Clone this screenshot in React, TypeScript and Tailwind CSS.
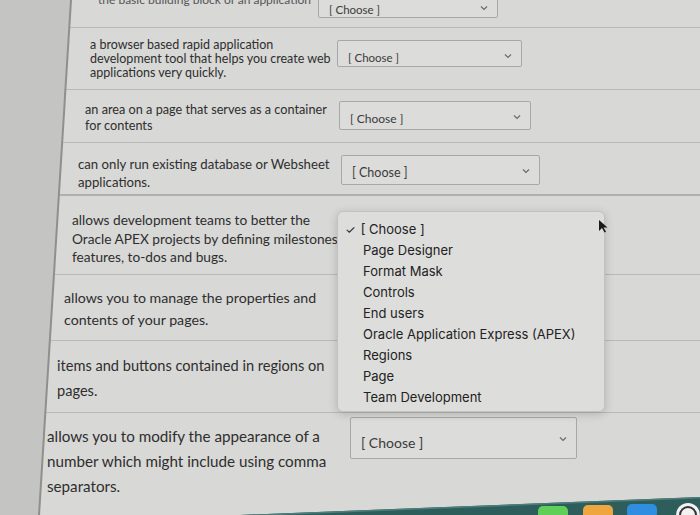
import React from "react";

const textFont = { fontFamily: "Lato, 'Open Sans', sans-serif" };

function Chevron() {
  return (
    <svg width="8" height="6" viewBox="0 0 8 6" className="flex-none">
      <path d="M1 1.5l3 3 3-3" fill="none" stroke="#6b6b6b" strokeWidth="1.2" />
    </svg>
  );
}

function Select({ w, h, size }: { w: string; h: string; size: string }) {
  return (
    <div
      className={`${w} ${h} ${size} flex-none flex items-start justify-between pl-[10px] pr-[9px] pt-[8px] bg-[#dcdcda] border border-[#a8a8a6] rounded-[2px] text-[#3b3b3b]`}
      style={textFont}
    >
      <span>[ Choose ]</span>
      <span className="pt-[4px]">
        <Chevron />
      </span>
    </div>
  );
}

const menuItems = [
  "Page Designer",
  "Format Mask",
  "Controls",
  "End users",
  "Oracle Application Express (APEX)",
  "Regions",
  "Page",
  "Team Development",
];

export default function App() {
  return (
    <div className="relative w-[700px] h-[515px] overflow-hidden bg-[#d8d8d6] text-[#2e2e2e]">
      <div className="flex h-full">
        {/* skewed gray margin left of the card */}
        <div className="w-[72px] flex-none h-full bg-[#8f8f8d] [clip-path:polygon(0_0,72px_0,40px_100%,0_100%)]">
          <div className="w-full h-full bg-[#c4c4c2] [clip-path:polygon(0_0,70px_0,38px_100%,0_100%)]" />
        </div>

        <div className="flex-1 -ml-[72px] flex flex-col" style={textFont}>
          {/* row 0 (cut off by the top of the photo) */}
          <div className="h-[28px] ml-[68px] flex-none flex border-b border-[#b9b9b7] overflow-hidden">
            <div className="w-[250px] pl-[30px] -mt-[7px] text-[12px] leading-[14px] whitespace-nowrap text-[#555]">
              the basic building block of an application
            </div>
            <div className="-mt-[12px]">
              <Select w="w-[180px]" h="h-[30px]" size="text-[11.5px] pt-[12px]" />
            </div>
          </div>

          {/* row 1 */}
          <div className="h-[62px] ml-[66px] flex-none flex items-start border-b border-[#b9b9b7]">
            <div className="w-[271px] pl-[24px] pt-[10px] text-[12.5px] leading-[14px] whitespace-nowrap">
              a browser based rapid application
              <br />
              development tool that helps you create web
              <br />
              applications very quickly.
            </div>
            <div className="pt-[12px]">
              <Select w="w-[185px]" h="h-[27px]" size="text-[11.5px]" />
            </div>
          </div>

          {/* row 2 */}
          <div className="h-[53px] ml-[63px] flex-none flex items-start border-b border-[#b9b9b7]">
            <div className="w-[276px] pl-[22px] pt-[11px] text-[12.7px] leading-[16px] whitespace-nowrap">
              an area on a page that serves as a container
              <br />
              for contents
            </div>
            <div className="pt-[11px]">
              <Select w="w-[192px]" h="h-[29px]" size="text-[12px]" />
            </div>
          </div>

          {/* row 3 */}
          <div className="h-[53px] ml-[60px] flex-none flex items-start border-b-2 border-[#b0b0ae]">
            <div className="w-[281px] pl-[18px] pt-[12px] text-[13.2px] leading-[18px] whitespace-nowrap">
              can only run existing database or Websheet
              <br />
              applications.
            </div>
            <div className="pt-[12px]">
              <Select w="w-[199px]" h="h-[30px]" size="text-[12.5px]" />
            </div>
          </div>

          {/* row 4 with the open menu */}
          <div className="relative h-[79px] ml-[55px] flex-none flex items-start border-b border-[#b9b9b7]">
            <div className="w-[282px] pl-[17px] pt-[15px] text-[13.7px] leading-[18.5px] whitespace-nowrap">
              allows development teams to better the
              <br />
              Oracle APEX projects by defining milestones,
              <br />
              features, to-dos and bugs.
            </div>

            <div
              className="absolute z-10 left-[282px] top-[15px] w-[268px] h-[201px] pt-[7px] rounded-[6px] bg-[#dddddb] border border-[#c2c2c0] shadow-[0_2px_10px_rgba(0,0,0,0.18)] text-[13px] text-[#222222]"
              style={{ fontFamily: "Inter, 'Noto Sans', sans-serif" }}
            >
              <div className="h-[21px] flex items-center pl-[7px] gap-[5px]">
                <span className="text-[12px]">✓</span>
                <span>[ Choose ]</span>
              </div>
              {menuItems.map((item) => (
                <div key={item} className="h-[21px] flex items-center pl-[25px]">
                  {item}
                </div>
              ))}
            </div>

            <svg
              className="absolute z-10 left-[543px] top-[23px]"
              width="10"
              height="14"
              viewBox="0 0 10 14"
            >
              <path d="M1 1v11l3-3 2.5 4.5 1.5-.8L5.5 8.5H9.5z" fill="#1a1a1a" />
            </svg>
          </div>

          {/* row 5 */}
          <div className="h-[66px] ml-[51px] flex-none flex items-start border-b border-[#b9b9b7]">
            <div className="w-[286px] pl-[13px] pt-[12px] text-[14.2px] leading-[22px] whitespace-nowrap">
              allows you to manage the properties and
              <br />
              contents of your pages.
            </div>
          </div>

          {/* row 6 */}
          <div className="h-[72px] ml-[46px] flex-none flex items-start border-b border-[#b9b9b7]">
            <div className="w-[291px] pl-[11px] pt-[12px] text-[14.6px] leading-[25px] whitespace-nowrap">
              items and buttons contained in regions on
              <br />
              pages.
            </div>
          </div>

          {/* row 7 */}
          <div className="flex-1 ml-[42px] flex items-start">
            <div className="w-[308px] pl-[5px] pt-[11px] text-[15.2px] leading-[25px] whitespace-nowrap">
              allows you to modify the appearance of a
              <br />
              number which might include using comma
              <br />
              separators.
            </div>
            <div className="pt-[4px]">
              <Select w="w-[227px]" h="h-[42px]" size="text-[14px] pt-[14px]" />
            </div>
          </div>
        </div>
      </div>

      {/* dock edge at the bottom of the photo */}
      <svg className="absolute left-0 bottom-0" width="700" height="20" viewBox="0 0 700 20">
        <polygon points="240,20 700,2 700,20" fill="#2d5e5c" />
        <polygon points="240,20 700,2 700,3.5 280,20" fill="#4c7d7a" />
        <rect x="538" y="11" width="30" height="14" rx="5" fill="#5fcf5a" />
        <rect x="583" y="10" width="30" height="14" rx="5" fill="#f0a640" />
        <rect x="627" y="9" width="30" height="14" rx="5" fill="#2f8ee0" />
        <circle cx="688" cy="20" r="12" fill="#f2f2f2" />
        <circle cx="688" cy="20" r="8" fill="none" stroke="#333" strokeWidth="2" />
      </svg>
    </div>
  );
}
